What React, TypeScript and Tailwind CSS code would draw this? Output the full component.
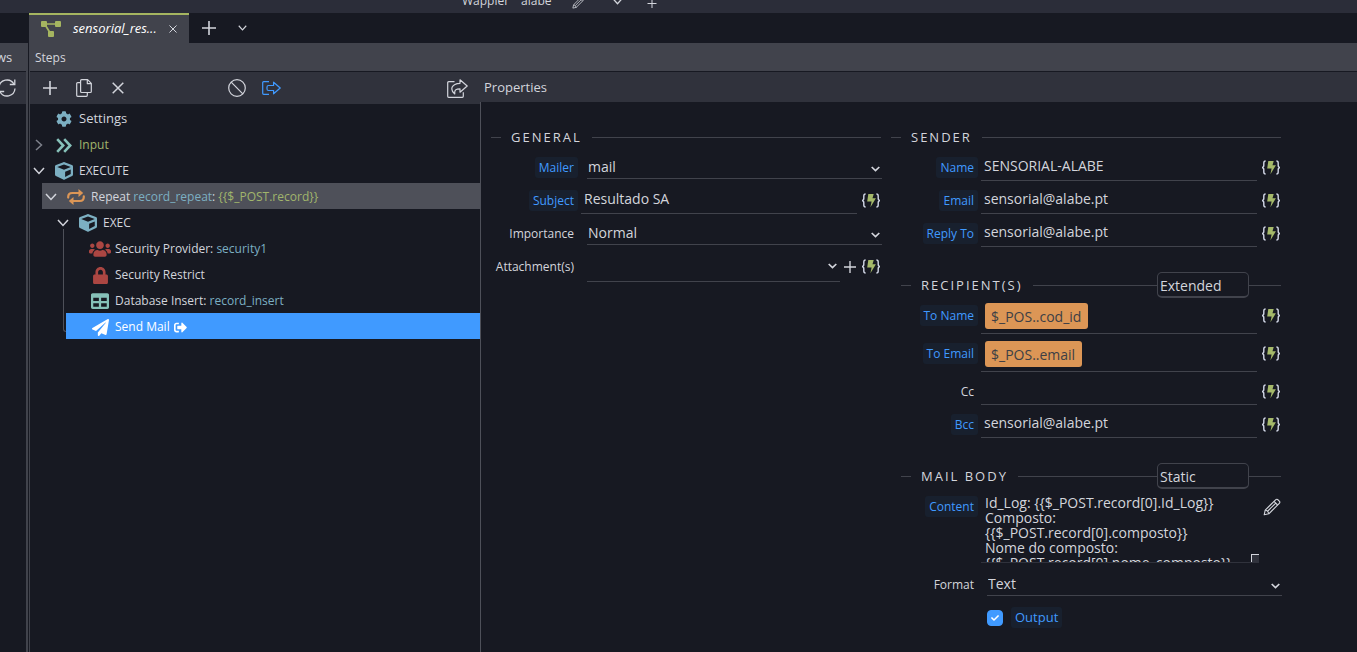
import React, { useState } from 'react';
import {
  FaCog,
  FaCube,
  FaUsers,
  FaLock,
  FaTable,
  FaPaperPlane,
  FaSignOutAlt,
  FaCheck,
} from 'react-icons/fa';
import clsx from 'clsx';

interface IconProps {
  className?: string;
}

interface TreeRowProps {
  level: number;
  icon: React.ReactNode;
  chevron?: 'open' | 'closed';
  state?: 'parent' | 'active';
  children: React.ReactNode;
}

const PlusIcon = ({ className }: IconProps) => (
  <svg viewBox="0 0 14 14" className={className} fill="none" stroke="currentColor" strokeWidth="1.6">
    <path d="M7 0v14M0 7h14" />
  </svg>
);

const CloseIcon = ({ className }: IconProps) => (
  <svg viewBox="0 0 12 12" className={className} fill="none" stroke="currentColor" strokeWidth="1.5">
    <path d="M0.7 0.7l10.6 10.6M11.3 0.7L0.7 11.3" />
  </svg>
);

const ChevronIcon = ({ className }: IconProps) => (
  <svg viewBox="0 0 12 8" className={className} fill="none" stroke="currentColor" strokeWidth="1.5">
    <path d="M1 1l5 5.5L11 1" />
  </svg>
);

const CaretIcon = ({ className }: IconProps) => (
  <svg viewBox="0 0 9 6" className={className} fill="none" stroke="currentColor" strokeWidth="1.7">
    <path d="M0.7 1L4.5 4.600 8.300 1" />
  </svg>
);

const PencilIcon = ({ className }: IconProps) => (
  <svg viewBox="0 0 18 18" className={className} fill="none" stroke="currentColor" strokeWidth="1.1" strokeLinejoin="round">
    <path d="M1.200 16.800l1-4.600L12.600 1.800q1-1 2-.3l1.900 1.900q.8 1-.2 2L5.800 15.800z" />
    <path d="M2.200 12.200q2.700 0 3.600 3.600M11 3.400l3.600 3.600M4.800 13L12.800 5.100" />
  </svg>
);

const RefreshIcon = ({ className }: IconProps) => (
  <svg viewBox="0 0 18 18" className={className} fill="none" stroke="currentColor" strokeWidth="1.3">
    <path d="M1 8.500A8 8 0 0 1 16 5.200M17 9.500A8 8 0 0 1 2 12.800" />
    <path d="M16.800 0.500v5h-5M1.200 17.500v-5h5" />
  </svg>
);

const CopyIcon = ({ className }: IconProps) => (
  <svg viewBox="0 0 16 18" className={className} fill="none" stroke="currentColor" strokeWidth="1.2" strokeLinejoin="round">
    <path d="M5.600 0.700h6l3.700 3.700v8.100q0 1-1 1H5.600q-1 0-1-1V1.700q0-1 1-1z" />
    <path d="M11.300 0.900v3.800h3.800M4.600 3.600H1.700q-1 0-1 1v11.700q0 1 1 1h8.600q1 0 1-1v-2.800" />
  </svg>
);

const BanIcon = ({ className }: IconProps) => (
  <svg viewBox="0 0 18 18" className={className} fill="none" stroke="currentColor" strokeWidth="1.2">
    <circle cx="9" cy="9" r="8.300" />
    <path d="M3.200 3.200l11.600 11.600" />
  </svg>
);

const ExitIcon = ({ className }: IconProps) => (
  <svg viewBox="0 0 19 14" className={className} fill="none" stroke="currentColor" strokeWidth="1.2" strokeLinejoin="round">
    <path d="M7 0.700H1.700q-1 0-1 1v10.600q0 1 1 1H7" />
    <path d="M11.600 1.200l6.600 5.800-6.600 5.800V9.500H6.500q-1.500 0-1.500-1.500V6q0-1.500 1.500-1.500h5.100z" />
  </svg>
);

const ShareIcon = ({ className }: IconProps) => (
  <svg viewBox="0 0 21 19" className={className} fill="none" stroke="currentColor" strokeWidth="1.2" strokeLinejoin="round">
    <path d="M7.500 2.700H1.700q-1 0-1 1v13.600q0 1 1 1h13.600q1 0 1-1v-4" />
    <path d="M13 0.800l7.200 6.200-7.200 6.200V9.800c-4 0-5.800 1.200-5.200 5.200C2.500 10.500 4.500 4.600 13 4.300z" />
  </svg>
);

const FlowIcon = ({ className }: IconProps) => (
  <svg viewBox="0 0 20 16" className={className} fill="currentColor">
    <rect x="0" y="0" width="6" height="6" rx="1" />
    <rect x="14" y="0" width="6" height="6" rx="1" />
    <rect x="7" y="10" width="6" height="6" rx="1" />
    <path d="M5 2.200h10v1.600H5zM3.800 5l1.500-.9 4 6.500-1.500.9z" />
  </svg>
);

const DoubleChevronIcon = ({ className }: IconProps) => (
  <svg viewBox="0 0 16 15" className={className} fill="none" stroke="currentColor" strokeWidth="2.6">
    <path d="M1.200 1.200l6 6.300-6 6.300M8.200 1.200l6 6.300-6 6.300" />
  </svg>
);

const LoopIcon = ({ className }: IconProps) => (
  <svg viewBox="0 0 18 16" className={className}>
    <path
      d="M1.200 8.600V8Q1.200 4 5.200 4H12M16.800 7.400V8Q16.800 12 12.800 12H6"
      fill="none"
      stroke="currentColor"
      strokeWidth="2.2"
      strokeLinecap="round"
    />
    <path d="M11.500 0l4.700 4-4.700 4zM6.500 8l-4.700 4 4.700 4z" fill="currentColor" />
  </svg>
);

const BindingIcon = ({ className }: IconProps) => (
  <svg viewBox="0 0 20 15" className={className}>
    <path
      d="M4.600 1Q2.800 1 2.800 3v2.300Q2.800 7.500 1 7.500 2.800 7.500 2.800 9.700V12q0 2 1.800 2M15.400 1q1.800 0 1.800 2v2.300q0 2.200 1.800 2.200-1.800 0-1.800 2.200V12q0 2-1.800 2"
      fill="none"
      stroke="#d3d8e8"
      strokeWidth="1.4"
    />
    <path d="M7.300 1h5.400l-1.200 4.200h3.400L9.400 14.300l1.200-5.900H6.200z" fill="#a5b96a" />
  </svg>
);

const BindingButton = () => (
  <button type="button" aria-label="Bind data" className="ml-auto flex h-[33px] items-center">
    <BindingIcon className="h-[15px] w-5" />
  </button>
);

const TreeRow = ({ level, icon, chevron, state, children }: TreeRowProps) => (
  <li
    className={clsx(
      'flex h-[26px] items-center pt-[2px] whitespace-nowrap',
      level === 1 && 'ml-3',
      level === 2 && 'ml-6',
      level === 3 && 'ml-9',
      state === 'parent' && 'bg-[#4e5059]',
      state === 'active' && 'bg-[#409aff] text-white'
    )}
  >
    <span className="flex w-[18px] shrink-0 justify-center">
      {chevron && (
        <ChevronIcon
          className={clsx('h-2 w-3', chevron === 'closed' && '-rotate-90 text-[#7d808a]')}
        />
      )}
    </span>
    <span className="mr-px flex w-[30px] shrink-0 justify-center pl-[2px]">{icon}</span>
    {children}
  </li>
);

interface LegendProps {
  title: string;
  mode?: string;
}

const Legend = ({ title, mode }: LegendProps) => (
  <div className={clsx('flex items-center', mode ? 'h-7' : 'h-[30px] pt-[2px]')}>
    <span className="h-px w-[10px] bg-[#41434c]" />
    <h3 className="mx-[10px] pt-px text-[13px] tracking-[2px]">{title}</h3>
    <span className="h-px flex-1 bg-[#41434c]" />
    {mode && (
      <>
        <select
          aria-label={`${title} mode`}
          className="h-[26px] w-[92px] appearance-none rounded-[5px] border border-b-2 border-[#41434c] pt-px pl-[2px] text-[14px]"
        >
          <option>{mode}</option>
        </select>
        <span className="h-px w-8 bg-[#41434c]" />
      </>
    )}
  </div>
);

interface FieldProps {
  id: string;
  label: string;
  nested?: boolean;
  plain?: boolean;
  children: React.ReactNode;
}

const Field = ({ id, label, nested, plain, children }: FieldProps) => (
  <div className="flex min-h-[33px] items-start">
    <div className={clsx('flex h-[33px] shrink-0 items-center justify-end', nested ? 'w-[77px]' : 'w-[87px]')}>
      <label
        htmlFor={id}
        className={clsx(
          'rounded-[3px] px-1 text-[12px] leading-[21px] whitespace-nowrap',
          !plain && 'bg-[#18202e] text-[#409aff]'
        )}
      >
        {label}
      </label>
    </div>
    {children}
  </div>
);

interface TextFieldProps {
  id: string;
  label: string;
  value: string;
  nested?: boolean;
  plain?: boolean;
}

const TextField = ({ id, label, value, nested, plain }: TextFieldProps) => (
  <Field id={id} label={label} nested={nested} plain={plain}>
    <input
      id={id}
      type="text"
      defaultValue={value}
      className="mr-1 ml-[3px] h-[30px] min-w-0 flex-1 border-b border-[#41434c] px-[3px] text-[14px] outline-none"
    />
    <BindingButton />
  </Field>
);

const TokenField = ({ id, label, value }: TextFieldProps) => (
  <Field id={id} label={label} nested>
    <div className="mr-1 mb-[3px] ml-[3px] flex h-[35px] flex-1 items-center border-b border-[#41434c] pl-1">
      <button id={id} type="button" className="h-[26px] rounded-[3px] bg-[#dc9656] pr-[7px] pl-[6px] text-[14px] text-[#3c3f45]">
        {value}
      </button>
    </div>
    <BindingButton />
  </Field>
);

const SelectField = ({ id, label, value, nested, plain }: TextFieldProps) => (
  <Field id={id} label={label} nested={nested} plain={plain}>
    <div className="relative -mr-px ml-[9px] flex-1">
      <select
        id={id}
        className="h-7 w-full appearance-none border-b border-[#41434c] pt-1 pl-px text-[14px] outline-none"
      >
        <option>{value}</option>
      </select>
      <CaretIcon className="pointer-events-none absolute top-[15px] right-[2px] h-[6px] w-[9px]" />
    </div>
  </Field>
);

const mailContent = [
  'Id_Log: {{$_POST.record[0].Id_Log}}',
  'Composto:',
  '{{$_POST.record[0].composto}}',
  'Nome do composto:',
  '{{$_POST.record[0].nome_composto}}',
].join('\n');

export default function App() {
  const [output, setOutput] = useState(true);

  return (
    <div className="flex h-screen flex-col overflow-hidden bg-[#171922] font-['Segoe_UI','Open_Sans',sans-serif] text-[13px] text-[#d3d5dc]">
      {/* Project bar */}
      <header className="flex h-[13px] shrink-0 items-end overflow-hidden bg-[#2b2d39] pb-1 pl-[462px] text-[12px] leading-[17px]">
        <span className="mr-3">Wappler</span>
        <span>alabe</span>
        <PencilIcon className="ml-5 size-[13px] shrink-0" />
        <ChevronIcon className="mb-1 ml-[27px] h-[7px] w-[11px] shrink-0" />
        <PlusIcon className="mb-[-3px] ml-[23px] h-[13px] w-3 shrink-0 pb-1" />
      </header>

      {/* File tabs */}
      <nav className="flex h-[30px] shrink-0 items-center pl-[29px]">
        <div className="flex h-full w-40 items-center border-t-2 border-[#a5b560] bg-[#41434c] pl-3">
          <FlowIcon className="h-4 w-5 shrink-0 text-[#a5b560]" />
          <span className="ml-3 flex-1 text-white italic">sensorial_res...</span>
          <button type="button" aria-label="Close tab" className="mr-3">
            <CloseIcon className="size-2" />
          </button>
        </div>
        <button type="button" aria-label="New tab" className="ml-[13px]">
          <PlusIcon className="size-[14px]" />
        </button>
        <button type="button" aria-label="Tab list" className="ml-[22px]">
          <ChevronIcon className="h-[6px] w-[9px]" />
        </button>
      </nav>

      <div className="flex min-h-0 flex-1">
        <aside className="mr-px flex w-7 shrink-0 flex-col overflow-hidden border-r-2 border-[#41434c]">
          <div className="mb-px h-7 bg-[#41434c] leading-7">
            <span className="-ml-1">ws</span>
          </div>
          <div className="flex h-8 items-center bg-[#30323c]">
            <button type="button" aria-label="Refresh" className="-ml-[2px]">
              <RefreshIcon className="size-[18px]" />
            </button>
          </div>
        </aside>

        <div className="flex min-w-0 flex-1 flex-col border-l border-[#41434c]">
          <h2 className="mb-px h-7 shrink-0 bg-[#41434c] pl-[5px] text-[12px] leading-[30px]">Steps</h2>

          <div className="flex min-h-0 flex-1">
            <section className="flex w-[450px] shrink-0 flex-col">
              <div className="flex h-8 shrink-0 items-center bg-[#30323c] pr-3 pl-[13px]">
                <button type="button" aria-label="Add step">
                  <PlusIcon className="size-[14px]" />
                </button>
                <button type="button" aria-label="Copy step" className="ml-[19px]">
                  <CopyIcon className="h-[18px] w-4" />
                </button>
                <button type="button" aria-label="Remove step" className="ml-5">
                  <CloseIcon className="size-3" />
                </button>
                <button type="button" aria-label="Disable step" className="ml-[104px]">
                  <BanIcon className="size-[18px]" />
                </button>
                <button type="button" aria-label="Toggle output" className="ml-4 text-[#409aff]">
                  <ExitIcon className="h-[14px] w-[19px]" />
                </button>
                <button type="button" aria-label="Open in browser" className="ml-auto">
                  <ShareIcon className="h-[19px] w-[21px]" />
                </button>
              </div>

              <ul className="relative mt-px text-[12px]">
                <TreeRow level={0} icon={<FaCog className="size-4 text-[#7cafc2]" />}>
                  <span className="text-[13px]">Settings</span>
                </TreeRow>
                <TreeRow
                  level={0}
                  chevron="closed"
                  icon={<DoubleChevronIcon className="h-[15px] w-4 text-[#86c1b9]" />}
                >
                  <span className="text-[12px] text-[#a1b56c]">Input</span>
                </TreeRow>
                <TreeRow level={0} chevron="open" icon={<FaCube className="size-[18px] text-[#7cafc2]" />}>
                  EXECUTE
                </TreeRow>
                <TreeRow
                  level={1}
                  chevron="open"
                  state="parent"
                  icon={<LoopIcon className="h-4 w-[18px] text-[#dc9656]" />}
                >
                  <span>
                    Repeat <span className="text-[#7cafc2]">record_repeat</span>:{' '}
                    <span className="text-[#a1b56c]">{'{{$_POST.record}}'}</span>
                  </span>
                </TreeRow>
                <TreeRow level={2} chevron="open" icon={<FaCube className="size-[18px] text-[#7cafc2]" />}>
                  EXEC
                </TreeRow>
                <TreeRow level={3} icon={<FaUsers className="h-[18px] w-[22px] shrink-0 text-[#ab4642]" />}>
                  <span>
                    Security Provider: <span className="text-[#7cafc2]">security1</span>
                  </span>
                </TreeRow>
                <TreeRow level={3} icon={<FaLock className="size-[17px] text-[#ab4642]" />}>
                  Security Restrict
                </TreeRow>
                <TreeRow level={3} icon={<FaTable className="size-[18px] text-[#86c1b9]" />}>
                  <span>
                    Database Insert: <span className="text-[#7cafc2]">record_insert</span>
                  </span>
                </TreeRow>
                <TreeRow level={3} state="active" icon={<FaPaperPlane className="size-[17px]" />}>
                  Send Mail
                  <FaSignOutAlt className="ml-1 size-[13px]" />
                </TreeRow>
                {/* Branch guide of the EXEC group */}
                <span className="absolute top-[124px] left-[33px] h-[103px] w-[3px] rounded-bl-[3px] border-b border-l border-[#4e5059]" />
              </ul>
            </section>

            <section className="flex min-w-0 flex-1 flex-col">
              <h2 className="h-[30px] shrink-0 bg-[#30323c] pl-1 leading-[30px]">Properties</h2>

              <form className="flex-1 border-l border-[#4e5059] pt-[19px] pl-[10px]">
                <div className="grid max-w-[790px] grid-cols-2 gap-[10px]">
                  <div>
                    <Legend title="GENERAL" />
                    <SelectField id="mailer" label="Mailer" value="mail" />
                    <TextField id="subject" label="Subject" value="Resultado SA" />
                    <SelectField id="importance" label="Importance" value="Normal" plain />
                    <Field id="attachments" label="Attachment(s)" plain>
                      <div className="relative mr-1 ml-[9px] flex-1">
                        <select
                          id="attachments"
                          className="h-8 w-full appearance-none border-b border-[#41434c] outline-none"
                        />
                        <CaretIcon className="pointer-events-none absolute top-[13px] right-[3px] h-[6px] w-[9px]" />
                      </div>
                      <button type="button" aria-label="Add attachment" className="mr-[5px] flex h-[33px] items-center">
                        <PlusIcon className="size-3" />
                      </button>
                      <BindingButton />
                    </Field>
                  </div>

                  <div>
                    <Legend title="SENDER" />
                    <TextField id="name" label="Name" value="SENSORIAL-ALABE" />
                    <TextField id="email" label="Email" value="sensorial@alabe.pt" />
                    <TextField id="reply-to" label="Reply To" value="sensorial@alabe.pt" />

                    <div className="mt-[21px] ml-[10px]">
                      <Legend title="RECIPIENT(S)" mode="Extended" />
                      <TokenField id="to-name" label="To Name" value="$_POS..cod_id" />
                      <TokenField id="to-email" label="To Email" value="$_POS..email" />
                      <TextField id="cc" label="Cc" value="" nested plain />
                      <TextField id="bcc" label="Bcc" value="sensorial@alabe.pt" nested />
                    </div>

                    <div className="mt-[21px] ml-[10px]">
                      <Legend title="MAIL BODY" mode="Static" />
                      <Field id="content" label="Content" nested>
                        <div className="relative mr-1 mb-[5px] ml-[3px] flex-1">
                          <textarea
                            id="content"
                            defaultValue={mailContent}
                            className="block h-[73px] w-full resize-none overflow-hidden border-b border-[#30323c] px-1 pt-[5px] text-[14px] leading-[15px] whitespace-pre outline-none"
                          />
                          <span className="absolute right-0 bottom-px size-2 border-t border-l border-[#d3d5dc] bg-[#30323c]" />
                        </div>
                        <button type="button" aria-label="Edit content" className="flex h-[33px] items-center">
                          <PencilIcon className="size-[18px]" />
                        </button>
                      </Field>
                      <SelectField id="format" label="Format" value="Text" nested plain />
                      <div className="flex h-[33px] items-center pl-[86px]">
                        <span className="relative flex size-4 items-center justify-center">
                          <input
                            id="output"
                            type="checkbox"
                            checked={output}
                            onChange={(e) => setOutput(e.target.checked)}
                            className="size-4 appearance-none rounded-[4px] border border-[#409aff] checked:bg-[#409aff]"
                          />
                          {output && <FaCheck className="pointer-events-none absolute size-2 text-white" />}
                        </span>
                        <label
                          htmlFor="output"
                          className="ml-2 rounded-[3px] bg-[#18202e] px-1 leading-[21px] text-[#409aff]"
                        >
                          Output
                        </label>
                      </div>
                    </div>
                  </div>
                </div>
              </form>
            </section>
          </div>
        </div>
      </div>
    </div>
  );
}
